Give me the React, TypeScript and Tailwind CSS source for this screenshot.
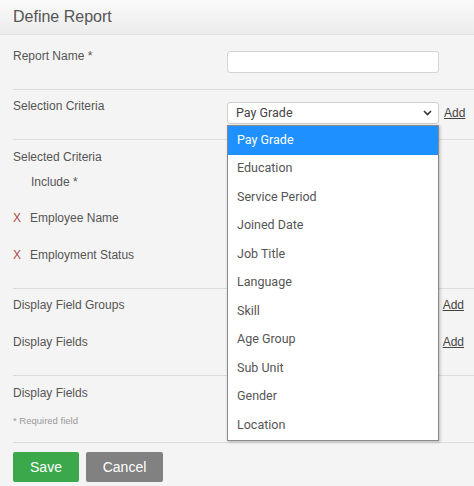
import { useState } from 'react';

const criteria = ['Pay Grade', 'Education', 'Service Period', 'Joined Date', 'Job Title', 'Language', 'Skill', 'Age Group', 'Sub Unit', 'Gender', 'Location'];

function AddLink() {
  return <a className="text-[12px] leading-[14px] text-[#444] underline">Add</a>;
}

export default function App() {
  const [picked, setPicked] = useState('Pay Grade');
  const lbl = 'text-[12px] leading-[14px] text-[#555]';
  return (
    <div className="h-[486px] w-[474px] overflow-hidden bg-[#f5f4f4] font-['Liberation_Sans',Arial,sans-serif]">
      <div className="flex h-[35px] items-center border-b border-[#e2e2e2] bg-gradient-to-b from-[#fafafa] to-[#ececec] px-[13px]">
        <h1 className="text-[16px] text-[#555]">Define Report</h1>
      </div>

      <div className="pl-[13px]">
        {/* report name */}
        <div className="flex h-[55px] items-start border-b border-[#dcdcdc] pt-[14px]">
          <span className={`${lbl} w-[214px]`}>Report Name *</span>
          <input className="mt-[2px] h-[22px] w-[212px] rounded-[3px] border border-[#d4d4d4] bg-white" />
        </div>

        {/* selection criteria */}
        <div className="flex h-[50px] items-start border-b border-[#dcdcdc] pt-[9px]">
          <span className={`${lbl} w-[214px]`}>Selection Criteria</span>
          <div className="relative mt-[3px]">
            <div className="flex h-[22px] w-[212px] items-center justify-between rounded-[3px] border border-[#cfcfcf] bg-white pl-[8px] pr-[6px] font-['Roboto',sans-serif] text-[12.5px] text-[#444]">
              {picked}
              <svg width="9" height="6" viewBox="0 0 9 6"><path d="M1 1l3.5 3.5L8 1" fill="none" stroke="#333" strokeWidth="1.6" /></svg>
            </div>
            <ul className="absolute left-0 top-[23px] z-10 w-[212px] border border-[#8a8a8a] bg-white font-['Roboto',sans-serif] text-[12.5px] text-[#555] shadow-[1px_1px_3px_rgba(0,0,0,0.25)]">
              {criteria.map((c) => (
                <li key={c} onClick={() => setPicked(c)} className={`flex h-[28.5px] items-center px-[9px] ${c === picked ? 'bg-[#1e90ff] text-white' : ''}`}>{c}</li>
              ))}
            </ul>
          </div>
          <span className="ml-[5px] mt-[1px]"><AddLink /></span>
        </div>

        {/* selected criteria */}
        <div className="h-[149px] border-b border-[#dcdcdc] pt-[10px]">
          <div className={lbl}>Selected Criteria</div>
          <div className={`${lbl} ml-[18px] mt-[11px]`}>Include *</div>
          <div className="mt-[22px] flex items-center gap-[9px]"><span className="text-[12px] leading-[14px] text-[#b04848]">X</span><span className={lbl}>Employee Name</span></div>
          <div className="mt-[23px] flex items-center gap-[9px]"><span className="text-[12px] leading-[14px] text-[#b04848]">X</span><span className={lbl}>Employment Status</span></div>
        </div>

        {/* display fields */}
        <div className="h-[87px] border-b border-[#dcdcdc] pt-[9px]">
          <div className="flex items-center justify-between pr-[10px]"><span className={lbl}>Display Field Groups</span><AddLink /></div>
          <div className="mt-[23px] flex items-center justify-between pr-[10px]"><span className={lbl}>Display Fields</span><AddLink /></div>
        </div>

        <div className="h-[67px] border-b border-[#dcdcdc] pt-[10px]">
          <div className={lbl}>Display Fields</div>
          <div className="mt-[15px] text-[9.5px] leading-[12px] text-[#999]">* Required field</div>
        </div>

        <div className="flex gap-[7px] pt-[9px]">
          <button className="h-[30px] w-[66px] rounded-[2px] bg-[#3ba84b] text-[14px] text-white">Save</button>
          <button className="h-[30px] w-[77px] rounded-[2px] bg-[#818181] text-[14px] text-white">Cancel</button>
        </div>
      </div>
    </div>
  );
}
